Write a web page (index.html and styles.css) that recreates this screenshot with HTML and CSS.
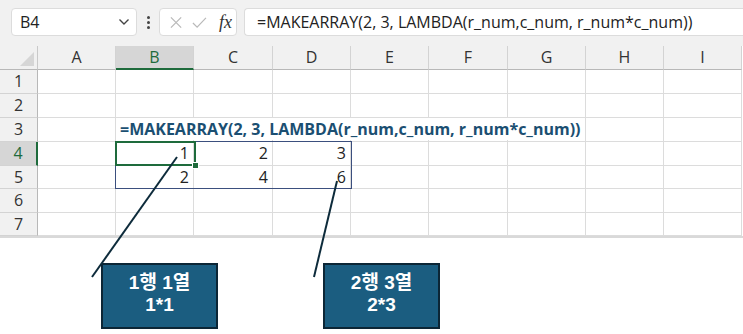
FILE: index.html
```html
<!DOCTYPE html>
<html lang="ko">

<head>
  <meta charset="UTF-8" />
  <meta name="viewport" content="width=device-width, initial-scale=1.0" />
  <title>MAKEARRAY</title>
  <link rel="stylesheet" href="styles.css">
</head>

<body>
  <div class="page">

    <!-- name box + formula bar -->
    <div class="toolbar">
      <div class="name-box">
        <span>B4</span>
        <svg class="chev" width="12" height="8" viewBox="0 0 12 8"><path d="M1.5 1.5 L6 6 L10.5 1.5" fill="none" stroke="#444" stroke-width="1.4"/></svg>
      </div>
      <div class="dots"><i></i><i></i><i></i></div>
      <div class="fx-box">
        <svg width="13" height="13" viewBox="0 0 13 13"><path d="M1 1 L12 12 M12 1 L1 12" stroke="#b9b9b9" stroke-width="1.3"/></svg>
        <svg width="16" height="13" viewBox="0 0 16 13"><path d="M1 7 L5.5 11.5 L15 1.5" fill="none" stroke="#b9b9b9" stroke-width="1.3"/></svg>
        <span class="fx">fx</span>
      </div>
      <div class="formula-box">=MAKEARRAY(2, 3, LAMBDA(r_num,c_num, r_num*c_num))</div>
    </div>

    <!-- sheet -->
    <div class="sheet">
      <div class="grid">
        <div class="corner"><span class="tri"></span></div>
        <div class="col-head">A</div>
        <div class="col-head sel">B</div>
        <div class="col-head">C</div>
        <div class="col-head">D</div>
        <div class="col-head">E</div>
        <div class="col-head">F</div>
        <div class="col-head">G</div>
        <div class="col-head">H</div>
        <div class="col-head">I</div>

        <div class="row-head">1</div>
        <div class="cell"></div><div class="cell"></div><div class="cell"></div><div class="cell"></div><div class="cell"></div><div class="cell"></div><div class="cell"></div><div class="cell"></div><div class="cell"></div>

        <div class="row-head">2</div>
        <div class="cell"></div><div class="cell"></div><div class="cell"></div><div class="cell"></div><div class="cell"></div><div class="cell"></div><div class="cell"></div><div class="cell"></div><div class="cell"></div>

        <div class="row-head">3</div>
        <div class="cell"></div>
        <div class="cell"><span class="formula-text">=MAKEARRAY(2, 3, LAMBDA(r_num,c_num, r_num*c_num))</span></div>
        <div class="cell"></div><div class="cell"></div><div class="cell"></div><div class="cell"></div><div class="cell"></div><div class="cell"></div><div class="cell"></div>

        <div class="row-head sel">4</div>
        <div class="cell"></div>
        <div class="cell num">1</div><div class="cell num">2</div><div class="cell num">3</div>
        <div class="cell"></div><div class="cell"></div><div class="cell"></div><div class="cell"></div><div class="cell"></div>

        <div class="row-head">5</div>
        <div class="cell"></div>
        <div class="cell num">2</div><div class="cell num">4</div><div class="cell num">6</div>
        <div class="cell"></div><div class="cell"></div><div class="cell"></div><div class="cell"></div><div class="cell"></div>

        <div class="row-head">6</div>
        <div class="cell"></div><div class="cell"></div><div class="cell"></div><div class="cell"></div><div class="cell"></div><div class="cell"></div><div class="cell"></div><div class="cell"></div><div class="cell"></div>

        <div class="row-head">7</div>
        <div class="cell"></div><div class="cell"></div><div class="cell"></div><div class="cell"></div><div class="cell"></div><div class="cell"></div><div class="cell"></div><div class="cell"></div><div class="cell"></div>
      </div>

      <!-- selection overlays -->
      <div class="spill-range"></div>
      <div class="active-cell"><span class="handle"></span></div>
    </div>

    <!-- callouts -->
    <div class="callouts">
      <div class="callout">1행 1열<br>1*1</div>
      <div class="callout">2행 3열<br>2*3</div>
    </div>

    <svg class="leaders" width="743" height="334" viewBox="0 0 743 334">
      <line x1="177" y1="157" x2="92" y2="277" />
      <line x1="337" y1="181" x2="314" y2="277" />
    </svg>
  </div>
</body>

</html>
```

FILE: styles.css
```css
body {
  margin: 0;
  background: #ffffff;
  font-family: 'Open Sans', 'Noto Sans', sans-serif;
  color: #222;
}

.page {
  position: relative;
  width: 743px;
  height: 334px;
  overflow: hidden;
}

/* ---- toolbar ---- */
.toolbar {
  display: flex;
  align-items: center;
  height: 46px;
  padding: 0 0 2px 11px;
  background: #f1f1f1;
  box-sizing: border-box;
}

.name-box {
  display: flex;
  align-items: center;
  justify-content: space-between;
  width: 126px;
  height: 28px;
  box-sizing: border-box;
  padding: 0 6px 0 8px;
  background: #fff;
  border: 1px solid #dcdcdc;
  border-radius: 4px;
  font-size: 16px;
}

.dots {
  display: flex;
  flex-direction: column;
  gap: 2px;
  margin: 0 9px 0 10px;
}

.dots i {
  width: 3px;
  height: 3px;
  background: #444;
  border-radius: 50%;
}

.fx-box {
  display: flex;
  align-items: center;
  gap: 10px;
  width: 78px;
  height: 28px;
  box-sizing: border-box;
  padding: 0 4px 0 10px;
  background: #fff;
  border: 1px solid #dcdcdc;
  border-radius: 4px;
}

.fx {
  font-family: 'Liberation Serif', serif;
  font-style: italic;
  font-size: 18px;
  color: #333;
  margin-left: 2px;
}

.formula-box {
  flex: 1;
  height: 28px;
  margin-left: 7px;
  box-sizing: border-box;
  padding: 2px 0 0 12px;
  background: #fff;
  border: 1px solid #dcdcdc;
  border-right: none;
  border-radius: 4px 0 0 4px;
  font-size: 16px;
  white-space: nowrap;
}

/* ---- sheet ---- */
.sheet {
  position: relative;
  border-bottom: 2px solid #d9d9d9;
}

.grid {
  display: grid;
  grid-template-columns: 38px 78px 78px 79px 78px 78px 79px 78px 78px 78px;
  grid-template-rows: 24px 24px 24px 24px 24px 23px 24px 23px;
  font-size: 16px;
}

.corner {
  position: relative;
  background: #f1f1f1;
  border-right: 1px solid #c9c9c9;
  border-bottom: 1px solid #b8b8b8;
  box-sizing: border-box;
}

.tri {
  position: absolute;
  right: 3px;
  bottom: 3px;
  width: 0;
  height: 0;
  border-left: 14px solid transparent;
  border-bottom: 14px solid #d6d6d6;
}

.col-head {
  background: #f1f1f1;
  border-right: 1px solid #d3d3d3;
  border-bottom: 1px solid #b8b8b8;
  box-sizing: border-box;
  text-align: center;
  line-height: 23px;
  color: #333;
}

.col-head.sel {
  background: #d6d6d6;
  color: #1e6b3c;
  border-bottom: 2px solid #1e6b3c;
}

.row-head {
  background: #f1f1f1;
  border-right: 1px solid #b8b8b8;
  border-bottom: 1px solid #d3d3d3;
  box-sizing: border-box;
  text-align: center;
  line-height: 23px;
  color: #333;
}

.row-head.sel {
  background: #d6d6d6;
  color: #1e6b3c;
  border-right: 2px solid #1e6b3c;
}

.cell {
  border-right: 1px solid #dcdcdc;
  border-bottom: 1px solid #dcdcdc;
  box-sizing: border-box;
  line-height: 23px;
  white-space: nowrap;
}

.num {
  text-align: right;
  padding-right: 4px;
}

.formula-text {
  position: relative;
  z-index: 1;
  padding-left: 4px;
  font-weight: 700;
  font-size: 16px;
  color: #1b4f72;
  background: #fff;
}

.spill-range {
  position: absolute;
  left: 115px;
  top: 95px;
  width: 237px;
  height: 48px;
  box-sizing: border-box;
  border: 1px solid #3b4f7e;
  pointer-events: none;
}

.active-cell {
  position: absolute;
  left: 115px;
  top: 95px;
  width: 81px;
  height: 25px;
  box-sizing: border-box;
  border: 2px solid #1e6b3c;
}

.handle {
  position: absolute;
  right: -5px;
  bottom: -5px;
  width: 5px;
  height: 5px;
  background: #1e6b3c;
  border: 1px solid #fff;
}

/* ---- callouts ---- */
.callouts {
  display: flex;
  gap: 105px;
  padding: 25px 0 0 101px;
}

.callout {
  width: 117px;
  height: 66px;
  box-sizing: border-box;
  padding-top: 7px;
  background: #1b5d80;
  border: 2px solid #0c2636;
  color: #fff;
  text-align: center;
  font-family: 'Liberation Sans', 'Noto Sans CJK KR', sans-serif;
  font-weight: 700;
  font-size: 19px;
  line-height: 22px;
}

.leaders {
  position: absolute;
  left: 0;
  top: 0;
  pointer-events: none;
}

.leaders line {
  stroke: #0d2b3b;
  stroke-width: 2;
}
```
